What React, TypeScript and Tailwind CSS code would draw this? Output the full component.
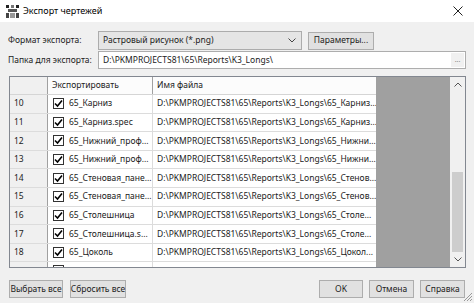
import React from "react";

const rows = [
  ["10", "65_Карниз", "D:\\PKMPROJECTS81\\65\\Reports\\K3_Longs\\65_Карниз..."],
  ["11", "65_Карниз.spec", "D:\\PKMPROJECTS81\\65\\Reports\\K3_Longs\\65_Карниз..."],
  ["12", "65_Нижний_проф...", "D:\\PKMPROJECTS81\\65\\Reports\\K3_Longs\\65_Нижни..."],
  ["13", "65_Нижний_проф...", "D:\\PKMPROJECTS81\\65\\Reports\\K3_Longs\\65_Нижни..."],
  ["14", "65_Стеновая_пане...", "D:\\PKMPROJECTS81\\65\\Reports\\K3_Longs\\65_Стенов..."],
  ["15", "65_Стеновая_пане...", "D:\\PKMPROJECTS81\\65\\Reports\\K3_Longs\\65_Стенов..."],
  ["16", "65_Столешница", "D:\\PKMPROJECTS81\\65\\Reports\\K3_Longs\\65_Столе..."],
  ["17", "65_Столешница.s...", "D:\\PKMPROJECTS81\\65\\Reports\\K3_Longs\\65_Столе..."],
  ["18", "65_Цоколь", "D:\\PKMPROJECTS81\\65\\Reports\\K3_Longs\\65_Цокол..."],
];

function Check() {
  return (
    <div className="w-[11px] h-[11px] border border-[#333] bg-white flex items-center justify-center shrink-0">
      <svg width="9" height="9" viewBox="0 0 9 9">
        <path d="M1 4.5 L3.5 7 L8 1.5" stroke="#000" strokeWidth="1.6" fill="none" />
      </svg>
    </div>
  );
}

function Btn({ children, w }: { children: React.ReactNode; w: string }) {
  return (
    <div className={`${w} h-[18px] bg-[#e1e1e1] border border-[#adadad] flex items-center justify-center text-[8.5px] text-[#222] whitespace-nowrap`}>
      {children}
    </div>
  );
}

export default function App() {
  return (
    <div
      className="w-[474px] h-[303px] bg-[#f0f0f0] flex flex-col relative overflow-hidden text-[#222] whitespace-nowrap"
      style={{ fontFamily: '"Noto Sans", "Open Sans", sans-serif' }}
    >
      {/* title bar */}
      <div className="h-[22px] bg-white flex items-center shrink-0">
        <svg className="ml-[6px]" width="13" height="13" viewBox="0 0 13 13">
          <rect x="0" y="0" width="13" height="13" fill="#fff" />
          <rect x="0" y="0" width="3" height="3" fill="#222" />
          <rect x="5" y="0" width="3" height="3" fill="#777" />
          <rect x="10" y="0" width="3" height="3" fill="#222" />
          <rect x="2" y="4" width="9" height="3" fill="#555" />
          <rect x="0" y="8" width="3" height="5" fill="#444" />
          <rect x="4" y="8" width="5" height="5" fill="#999" />
          <rect x="10" y="8" width="3" height="5" fill="#444" />
        </svg>
        <span className="ml-[4px] text-[9px] text-black">Экспорт чертежей</span>
        <div className="flex-1" />
        <svg className="mr-[11px]" width="10" height="10" viewBox="0 0 10 10">
          <path d="M0.5 0.5 L9.5 9.5 M9.5 0.5 L0.5 9.5" stroke="#222" strokeWidth="1" />
        </svg>
      </div>

      <div className="px-[8px] pt-[9px] flex flex-col flex-1 text-[8.5px]">
        {/* format row */}
        <div className="flex items-center h-[19px]">
          <div className="w-[90px]">Формат экспорта:</div>
          <div className="w-[204px] h-[19px] bg-[#e5e5e5] border border-[#acacac] flex items-center pl-[4px]">
            <span className="flex-1">Растровый рисунок (*.png)</span>
            <svg className="mr-[5px]" width="8" height="5" viewBox="0 0 8 5">
              <path d="M0.5 0.5 L4 4 L7.5 0.5" stroke="#444" fill="none" />
            </svg>
          </div>
          <div className="ml-[6px]">
            <Btn w="w-[66px]">Параметры...</Btn>
          </div>
        </div>

        {/* folder row */}
        <div className="flex items-center h-[18px] mt-[1px]">
          <div className="w-[90px]">Папка для экспорта:</div>
          <div className="w-[368px] h-[18px] bg-white border border-[#adadad] flex items-center pl-[4px]">
            <span className="flex-1">D:\PKMPROJECTS81\65\Reports\K3_Longs\</span>
            <div className="w-[13px] h-[14px] mr-[1px] bg-[#f0f0f0] flex items-center justify-center text-[7px] text-[#888]">...</div>
          </div>
        </div>

        {/* grid */}
        <div className="mt-[7px] ml-[1px] w-[457px] h-[192px] border border-[#828790] bg-[#a0a0a0] flex overflow-hidden">
          <div className="w-[366px] bg-white flex flex-col">
            <div className="flex h-[18px] border-b border-[#d5d5d5] shrink-0">
              <div className="w-[38px] bg-[#f0f0f0] border-r border-[#a0a0a0]" />
              <div className="w-[105px] border-r border-[#a0a0a0] pl-[4px] flex items-center bg-[#fcfcfc]">Экспортировать</div>
              <div className="flex-1 pl-[4px] flex items-center bg-[#fcfcfc]">Имя файла</div>
            </div>
            {rows.map((r) => (
              <div key={r[0]} className="flex h-[18.6px] border-b border-[#dcdcdc] shrink-0">
                <div className="w-[38px] bg-[#f0f0f0] border-r border-[#a0a0a0] pl-[4px] flex items-center">{r[0]}</div>
                <div className="w-[105px] border-r border-[#dcdcdc] pl-[5px] flex items-center gap-[5px] overflow-hidden">
                  <Check />
                  <span>{r[1]}</span>
                </div>
                <div className="flex-1 pl-[4px] flex items-center overflow-hidden">{r[2]}</div>
              </div>
            ))}
            <div className="flex h-[10px] shrink-0">
              <div className="w-[38px] bg-[#f0f0f0] border-r border-[#a0a0a0]" />
              <div className="w-[105px] border-r border-[#dcdcdc] pl-[5px]">
                <div className="w-[11px] h-[4px] border-t border-x border-[#333] mt-[3px]" />
              </div>
            </div>
          </div>
          <div className="flex-1" />
          <div className="w-[15px] bg-[#f0f0f0] flex flex-col items-center">
            <svg className="mt-[5px]" width="8" height="5" viewBox="0 0 8 5">
              <path d="M0.5 4.5 L4 1 L7.5 4.5" stroke="#555" fill="none" />
            </svg>
            <div className="flex-1 w-full flex flex-col">
              <div className="h-[85px]" />
              <div className="h-[80px] mx-[2px] bg-[#cdcdcd]" />
            </div>
            <svg className="mb-[5px]" width="8" height="5" viewBox="0 0 8 5">
              <path d="M0.5 0.5 L4 4 L7.5 0.5" stroke="#555" fill="none" />
            </svg>
          </div>
        </div>

        {/* bottom buttons */}
        <div className="flex items-center mt-[12px] ml-[1px]">
          <Btn w="w-[54px]">Выбрать все</Btn>
          <div className="ml-[7px]">
            <Btn w="w-[56px]">Сбросить все</Btn>
          </div>
          <div className="flex-1" />
          <Btn w="w-[44px]">OK</Btn>
          <div className="ml-[6px]">
            <Btn w="w-[45px]">Отмена</Btn>
          </div>
          <div className="ml-[6px] mr-[1px]">
            <Btn w="w-[45px]">Справка</Btn>
          </div>
        </div>
      </div>

      {/* resize grip */}
      <svg className="absolute right-[1px] bottom-[1px]" width="11" height="11" viewBox="0 0 11 11">
        <path d="M10 2 L2 10 M10 5 L5 10 M10 8 L8 10" stroke="#999" strokeWidth="1" />
      </svg>
    </div>
  );
}
